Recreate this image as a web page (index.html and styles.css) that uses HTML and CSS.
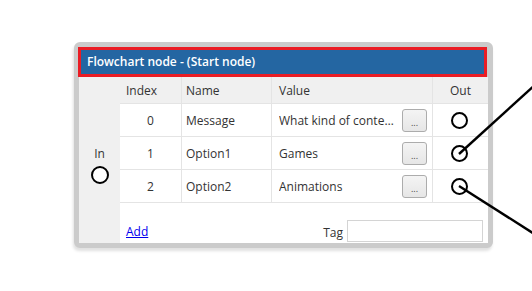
FILE: index.html
```html
<!DOCTYPE html>
<html>
<head>
<meta charset="utf-8">
<link rel="stylesheet" href="styles.css">
</head>
<body>
<div class="node">
  <div class="title">Flowchart node - (Start node)</div>
  <div class="body">
    <div class="in-col">
      <span class="in-label">In</span>
      <span class="port"></span>
    </div>
    <div class="table">
      <div class="grid">
        <div class="hd c-index">Index</div>
        <div class="hd c-name">Name</div>
        <div class="hd c-value">Value</div>
        <div class="hd c-out">Out</div>

        <div class="cell c-index">0</div>
        <div class="cell c-name">Message</div>
        <div class="cell c-value"><span class="val">What kind of content?</span><button class="dots">...</button></div>
        <div class="cell c-out"><span class="port"></span></div>

        <div class="cell c-index">1</div>
        <div class="cell c-name">Option1</div>
        <div class="cell c-value"><span class="val">Games</span><button class="dots">...</button></div>
        <div class="cell c-out"><span class="port"></span></div>

        <div class="cell c-index">2</div>
        <div class="cell c-name">Option2</div>
        <div class="cell c-value"><span class="val">Animations</span><button class="dots">...</button></div>
        <div class="cell c-out"><span class="port"></span></div>
      </div>
      <div class="footer">
        <a class="add" href="#">Add</a>
        <label class="tag"><span class="tag-text">Tag</span><input class="tag-input" type="text"></label>
      </div>
    </div>
  </div>
</div>
<svg class="wires" width="532" height="291" viewBox="0 0 532 291">
  <line x1="459" y1="154" x2="536" y2="84" stroke="#000" stroke-width="2.4"/>
  <line x1="459" y1="186" x2="536" y2="235" stroke="#000" stroke-width="2.4"/>
</svg>
</body>
</html>
```

FILE: styles.css
```css
* { box-sizing: border-box; }
html, body { margin: 0; background: #fff; }
body {
  padding: 42px 0 0 74px;
  font-family: "Open Sans", "Noto Sans", sans-serif;
  font-size: 12px;
  color: #333;
  width: 532px;
  height: 291px;
  overflow: hidden;
}
.node {
  width: 419px;
  border: 5px solid #cbcbcb;
  border-radius: 6px;
  background: #cbcbcb;
  box-shadow: -1px 3px 3px rgba(0,0,0,0.12);
}
.title {
  height: 30px;
  margin: 0 1px 0 -1px;
  border: 3px solid #ea1c24;
  background: #2466a2;
  color: #fff;
  font-weight: 600;
  font-size: 12px;
  line-height: 24px;
  padding-left: 6px;
  white-space: nowrap;
}
.body {
  display: flex;
  background: #fff;
}
.in-col {
  width: 41px;
  background: #f0f0f0;
  display: flex;
  flex-direction: column;
  align-items: center;
  justify-content: center;
  padding-top: 10px;
  gap: 4px;
}
.in-label { line-height: 16px; }
.port {
  display: block;
  width: 18px;
  height: 18px;
  border: 2px solid #000;
  border-radius: 50%;
  background: #fff;
}
.table { flex: 1; }
.grid {
  display: grid;
  grid-template-columns: 62px 90px 161px 55px;
  grid-template-rows: 27px 33px 33px 33px;
}
.grid > div {
  border-right: 1px solid #e4e4e4;
  border-bottom: 1px solid #e4e4e4;
  display: flex;
  align-items: center;
  white-space: nowrap;
  padding-top: 1px;
}
.grid > .c-out { border-right: none; justify-content: center; padding-top: 0; }
.hd { background: #f0f0f0; }
.hd.c-index { padding-left: 6px; }
.c-name { padding-left: 4px; }
.c-value { padding-left: 7px; padding-right: 5px; }
.cell.c-index { justify-content: center; }
.cell.c-out .port { width: 17px; height: 17px; margin-left: -3px; }
.val {
  flex: 1;
  overflow: hidden;
  text-overflow: ellipsis;
  padding-right: 2px;
}
.dots {
  width: 25px;
  height: 23px;
  flex: none;
  border: 1px solid #acacac;
  border-radius: 3px;
  background: linear-gradient(#f4f4f4, #e6e6e6);
  font-family: "Open Sans", sans-serif;
  font-size: 9px;
  color: #444;
  padding: 5px 0 0;
  line-height: 12px;
  margin-top: -1px;
}
.footer {
  height: 40px;
  display: flex;
  align-items: flex-end;
  justify-content: space-between;
  padding: 0 5px 1px 6px;
}
.add {
  color: #0000ee;
  text-decoration: underline;
  line-height: 22px;
  font-size: 12px;
  margin-bottom: -1px;
}
.tag {
  display: flex;
  align-items: flex-end;
  gap: 4px;
}
.tag-text { line-height: 18px; }
.tag-input {
  width: 136px;
  height: 22px;
  border: 1px solid #d4d4d4;
  margin: 0;
  padding: 0 3px;
  font: inherit;
}
.wires {
  position: absolute;
  left: 0;
  top: 0;
  pointer-events: none;
}
```
